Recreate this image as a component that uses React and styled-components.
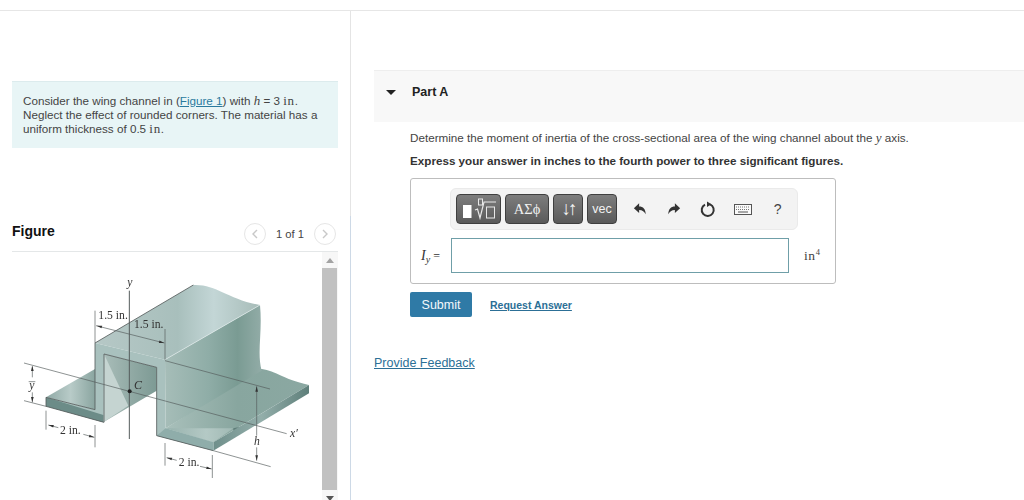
import React from "react";
import styled, { createGlobalStyle } from "styled-components";

const Global = createGlobalStyle`
  html, body { margin: 0; padding: 0; background: #fff; overflow: hidden; }
  body { font-family: "Liberation Sans", Arial, sans-serif; color: #333; }
`;
const Page = styled.div`width: 1024px; height: 500px; overflow: hidden; display: flex; flex-direction: column;`;
const TopBar = styled.div`height: 10px; border-bottom: 1px solid #e6e6e6; flex: none;`;
const Columns = styled.div`display: flex; flex: 1; min-height: 0;`;
const LeftCol = styled.div`
  width: 350px; flex: none; border-right: 1px solid #e2e2e2;
  border-image: linear-gradient(#e4e4e4 205px, #cdd9e6 205px) 1;
  padding: 70px 0 0 0; display: flex; flex-direction: column; min-height: 0;
`;
const InfoBox = styled.div`
  margin: 0 12px; width: 326px; height: 67px; box-sizing: border-box; background: #e8f5f6;
  border-top: 1px solid #dcebed; padding: 12px 11px 0; font-size: 11.66px; line-height: 14px; color: #444;
`;
const Serif = styled.span`
  font-family: "Liberation Serif", "DejaVu Serif", serif; font-size: 13px;
  font-style: ${p => p.$i ? "italic" : "normal"};
  letter-spacing: ${p => p.$i ? "0" : "0.7px"};
`;
const InlineLink = styled.a`color: #2a7a9e; text-decoration: underline;`;
const FigureHead = styled.div`
  margin: 72px 12px 0; width: 326px; height: 32px; box-sizing: border-box; border-bottom: 1px solid #e4e7e8;
  display: flex; align-items: flex-start; justify-content: space-between; padding-top: 3px;
`;
const FigureTitle = styled.div`font-size: 14px; font-weight: 700; color: #111; line-height: 16px;`;
const Pager = styled.div`display: flex; align-items: center; gap: 10px; font-size: 11.2px; color: #444; margin-right: 2px;`;
const PageBtn = styled.div`
  width: 22px; height: 22px; border-radius: 50%; border: 1px solid #e6e6e6; box-sizing: border-box;
  display: flex; align-items: center; justify-content: center; background: #fff;
`;
const FigureBody = styled.div`margin: 0 12px; width: 326px; flex: 1; display: flex; min-height: 0; overflow: hidden;`;
const FigureSvg = styled.svg`width: 310px; height: 230px; margin-top: 17px; flex: none; display: block; filter: blur(0.3px);`;
const Scrollbar = styled.div`width: 16px; flex: none; display: flex; flex-direction: column; align-items: flex-start; background: #f7f7f7;`;
const ScrollArrow = styled.div`
  height: 16px; width: 15px; flex: none; display: flex; align-items: center; justify-content: center;
`;
const ScrollThumb = styled.div`width: 15px; height: 222px; background: #c1c1c1; flex: none;`;

const RightCol = styled.div`flex: 1; min-width: 0; padding: 59px 0 0 23px; display: flex; flex-direction: column;`;
const PartBar = styled.div`
  height: 52px; box-sizing: border-box; background: #f8f8f8; border-top: 1px solid #eeeeee;
  display: flex; align-items: flex-start; padding: 14px 0 0 12px;
`;
const Caret = styled.div`
  width: 0; height: 0; border-left: 5px solid transparent; border-right: 5px solid transparent;
  border-top: 5px solid #222; margin: 5px 16px 0 0;
`;
const PartTitle = styled.div`font-size: 12.5px; font-weight: 700; color: #222; line-height: 15px;`;
const Body = styled.div`padding: 8px 0 0 36px; display: flex; flex-direction: column; align-items: flex-start;`;
const Prompt = styled.div`font-size: 11.68px; color: #444; line-height: 16px;`;
const Instruct = styled.div`font-size: 11.66px; font-weight: 700; color: #333; line-height: 16px; margin-top: 7px;`;
const AnswerBox = styled.div`
  margin-top: 9px; width: 426px; height: 106px; box-sizing: border-box; border: 1px solid #bdbdbd; border-radius: 3px;
  display: flex; flex-direction: column; padding: 9px 0 0 39px;
`;
const Toolbar = styled.div`
  width: 348px; height: 42px; box-sizing: border-box; background: #f3f3f3; border: 1px solid #eaeaea; border-radius: 6px;
  display: flex; align-items: center; padding: 0 0 0 5px;
`;
const ToolBtn = styled.div`
  width: ${p => p.$w}px; height: 30px; box-sizing: border-box; margin-right: 4px; border-radius: 4px; border: 1px solid #3f3f3f;
  background: linear-gradient(#7d7d7d, #5a5a5a); color: #f2f2f2; display: flex; align-items: center; justify-content: center;
  font-size: ${p => p.$fs || 13}px; letter-spacing: ${p => p.$ls || 0}px;
  font-family: ${p => p.$serif ? '"Liberation Serif", serif' : '"Liberation Sans", sans-serif'};
`;
const PlainTools = styled.div`display: flex; align-items: center; margin-left: 1.5px;`;
const PlainTool = styled.div`width: 34.5px; display: flex; justify-content: center; align-items: center; color: #444; font-size: 14px;`;
const AnswerRow = styled.div`display: flex; align-items: center; margin: 8px 0 0 -29px;`;
const VarLabel = styled.div`
  width: 30px; flex: none; font-family: "Liberation Serif", serif; font-size: 12px; color: #333;
  i { font-size: 14px; } sub { font-size: 10px; font-style: italic; line-height: 0; }
`;
const AnswerInput = styled.div`width: 338px; height: 35px; box-sizing: border-box; border: 1px solid #6f9fa8; background: #fff; flex: none;`;
const Unit = styled.div`
  margin-left: 15px; font-family: "Liberation Serif", serif; font-size: 13.5px; color: #444; letter-spacing: 0.6px;
  sup { font-size: 8.5px; line-height: 0; }
`;
const Actions = styled.div`display: flex; align-items: center; margin-top: 8px;`;
const Submit = styled.div`
  width: 62px; height: 25px; border-radius: 2px; background: #2f7aa6; color: #f4f8fb; font-size: 12.5px;
  display: flex; align-items: center; justify-content: center;
`;
const RequestLink = styled.a`margin-left: 18px; font-size: 10.5px; font-weight: 700; color: #2c6f96; text-decoration: underline;`;
const Feedback = styled.a`margin: 38px 0 0 -36px; font-size: 12.5px; color: #2c6f96; text-decoration: underline; line-height: 16px;`;

const Chevron = ({ left }) => (
  <svg width="8" height="10" viewBox="0 0 8 10" fill="none" stroke="#c8c8c8" strokeWidth="1.4">
    <path d={left ? "M6 1 L2 5 L6 9" : "M2 1 L6 5 L2 9"} />
  </svg>
);

const Dim = ({ d, w = 2 }) => <path d={d} fill="none" stroke="#555c5c" strokeWidth={w} />;
const Arrow = ({ x, y, a }) => <path d="M0 0 L-16 -4 L-16 4 Z" fill="#333" transform={`translate(${x} ${y}) rotate(${a})`} />;
const Label = styled.text`font-family: "Liberation Serif", serif; font-size: ${p => p.$s || 35}px; fill: #333; font-style: ${p => p.$i ? "italic" : "normal"};`;

const Figure = () => (
  <FigureSvg viewBox="36 0 930 690">
    <defs>
      <linearGradient id="top" x1="0" x2="1" y1="0" y2="0">
        <stop offset="0" stopColor="#b6c8c6" /><stop offset=".5" stopColor="#a8bfbc" /><stop offset=".72" stopColor="#c3d6d6" /><stop offset="1" stopColor="#a7bcb8" />
      </linearGradient>
      <linearGradient id="side" x1="0" x2="1" y1="0" y2="0">
        <stop offset="0" stopColor="#a6bdb8" /><stop offset=".45" stopColor="#8fada7" /><stop offset=".75" stopColor="#7a9b93" /><stop offset="1" stopColor="#92aca7" />
      </linearGradient>
      <linearGradient id="flange" x1="0" x2="1" y1="0" y2="0">
        <stop offset="0" stopColor="#a9c0bb" /><stop offset=".5" stopColor="#88a69f" /><stop offset="1" stopColor="#8ba8a2" />
      </linearGradient>
      <linearGradient id="lf" x1="0" x2="1" y1="0" y2="0">
        <stop offset="0" stopColor="#8fa9a5" /><stop offset=".5" stopColor="#b8cbc8" /><stop offset="1" stopColor="#8aa5a0" />
      </linearGradient>
      <linearGradient id="cav" x1="0" x2="1" y1="0" y2="0">
        <stop offset="0" stopColor="#a9bdb9" /><stop offset=".45" stopColor="#94aca7" /><stop offset="1" stopColor="#7d9a94" />
      </linearGradient>
      <linearGradient id="edge" x1="0" x2="1" y1="0" y2="0">
        <stop offset="0" stopColor="#6f8f8b" /><stop offset=".5" stopColor="#93aeaa" /><stop offset="1" stopColor="#5e7f7a" />
      </linearGradient>
      <linearGradient id="pale" x1="0" x2="1" y1="0" y2="0">
        <stop offset="0" stopColor="#97b2ad" /><stop offset=".6" stopColor="#b4c9c5" /><stop offset="1" stopColor="#a0b9b4" />
      </linearGradient>
    </defs>
    <path d="M497 478 L778 300 C820 300 845 330 927 348 L640 520 Z" fill="url(#flange)" />
    <path d="M497 478 L700 478 L640 520 Z" fill="url(#pale)" />
    <path d="M700 478 L760 465 L700 498 Z" fill="#5f7d78" />
    <path d="M640 520 L927 348 V373 L640 545 Z" fill="url(#edge)" />
    <path d="M495 272 L780 108 C788 190 770 250 785 305 L497 478 Z" fill="url(#side)" />
    <path d="M285 222 L580 48 C650 45 680 90 780 108 L495 272 Z" fill="url(#top)" />
    <path d="M138 385 L285 300 V422 Z" fill="url(#lf)" />
    <path d="M312 255 L470 295 V365 L310 460 Z" fill="url(#cav)" />
    <path d="M312 255 L385 410 L310 460 Z" fill="#c5d4d1" />
    <path d="M285 222 L495 272 L497 478 L640 520 V545 L470 500 V295 L312 255 L310 460 L138 412 V385 L285 422 Z" fill="#a9c1be" />
    <path d="M138 385 L138 412 L310 460 L310 438 Z" fill="#6c8c88" />
    <path d="M470 500 L640 545 V520 L497 478 Z" fill="#8fadaa" />
    <Dim d="M285 222 L580 48" w={2.5} />
    <Dim d="M138 385 L285 422 V222 M312 255 L470 295 M312 255 V460 L138 412 V385 M470 295 V500 L640 545" w={2.5} />
    <path d="M495 272 L780 108" fill="none" stroke="#dfeaea" strokeWidth="2" />
    <Dim d="M388 65 V510" w={3} />
    <Dim d="M72 282 L860 494" />
    <Dim d="M495 275 L810 360" />
    <Dim d="M72 395 L138 412" />
    <Dim d="M640 545 L812 593" />
    <Dim d="M285 125 V222 M495 180 V272 M288 170 L493 222" />
    <Arrow x={493} y={222} a={14} />
    <Arrow x={290} y={170} a={194} />
    <Dim d="M97 292 V325 M97 370 V400" />
    <Arrow x={97} y={290} a={-90} />
    <Arrow x={97} y={400} a={90} />
    <Dim d="M138 425 V482 M285 468 V535 M495 522 V590 M637 558 V627" />
    <Dim d="M145 468 L175 476 M250 496 L283 505 M500 566 L530 574 M600 592 L635 600" />
    <Arrow x={145} y={468} a={194} />
    <Arrow x={283} y={505} a={14} />
    <Arrow x={500} y={566} a={194} />
    <Arrow x={635} y={600} a={14} />
    <Dim d="M770 352 V500 M770 535 V575" />
    <Arrow x={770} y={352} a={-90} />
    <Arrow x={770} y={575} a={90} />
    <circle cx="389" cy="367" r="6" fill="#222" />
    <Label x="382" y="50" $i>y</Label>
    <Label x="295" y="150">1.5 in.</Label>
    <Label x="402" y="176">1.5 in.</Label>
    <Label x="402" y="360" $i $s={36}>C</Label>
    <Label x="180" y="494">2 in.</Label>
    <Label x="536" y="590">2 in.</Label>
    <Label x="762" y="528" $i>h</Label>
    <Label x="870" y="503" $i>x′</Label>
    <Label x="88" y="360" $i>y</Label>
    <Dim d="M86 338 H106" />
  </FigureSvg>
);

const Template = () => (
  <svg width="36" height="22" viewBox="0 0 36 22" fill="none" stroke="#e8e8e8" strokeWidth="1">
    <rect x="2" y="7" width="8.5" height="13" fill="#fff" stroke="none" />
    <rect x="17.5" y="1" width="4" height="6" />
    <path d="M14 12 L16.5 11 L19 20 L23 4 H35" strokeWidth="1.2" />
    <rect x="25.5" y="9" width="8" height="11" />
  </svg>
);
const Undo = ({ flip }) => (
  <svg width="14" height="14" viewBox="0 0 16 16" style={flip ? { transform: "scaleX(-1)" } : undefined}>
    <path d="M1 7 L7 1.5 V5 C11.5 5 14.5 8 14.5 14 C13 10.8 10.8 9 7 9 V12.5 Z" fill="#333" />
  </svg>
);
const Reset = () => (
  <svg width="17" height="17" viewBox="0 0 17 17" fill="none" stroke="#333" strokeWidth="2">
    <path d="M10 3.4 A6 6 0 1 1 5 3.6" />
    <path d="M7 0.5 L11.5 3.3 L7 6 Z" fill="#333" stroke="none" />
  </svg>
);
const Keyboard = () => (
  <svg width="18" height="11" viewBox="0 0 18 11" fill="none">
    <rect x=".5" y=".5" width="17" height="10" fill="#fafafa" stroke="#555" />
    <path d="M2 3 H16 M2 5.5 H16" stroke="#777" strokeWidth="1.2" strokeDasharray="1 1" />
    <path d="M4 8 H14" stroke="#555" />
  </svg>
);

export default function App() {
  return (
    <Page>
      <Global />
      <TopBar />
      <Columns>
        <LeftCol>
          <InfoBox>
            Consider the wing channel in (<InlineLink>Figure 1</InlineLink>) with <Serif $i>h</Serif> = 3 <Serif>in</Serif>.<br />
            Neglect the effect of rounded corners. The material has a<br />
            uniform thickness of 0.5 <Serif>in</Serif>.
          </InfoBox>
          <FigureHead>
            <FigureTitle>Figure</FigureTitle>
            <Pager>
              <PageBtn><Chevron left /></PageBtn>
              1 of 1
              <PageBtn><Chevron /></PageBtn>
            </Pager>
          </FigureHead>
          <FigureBody>
            <Figure />
            <Scrollbar>
              <ScrollArrow>
                <svg width="8" height="5" viewBox="0 0 8 5"><path d="M0 5 L4 0 L8 5 Z" fill="#a3a3a3" /></svg>
              </ScrollArrow>
              <ScrollThumb />
              <ScrollArrow>
                <svg width="8" height="5" viewBox="0 0 8 5"><path d="M0 0 L4 5 L8 0 Z" fill="#555" /></svg>
              </ScrollArrow>
            </Scrollbar>
          </FigureBody>
        </LeftCol>
        <RightCol>
          <PartBar>
            <Caret />
            <PartTitle>Part A</PartTitle>
          </PartBar>
          <Body>
            <Prompt>Determine the moment of inertia of the cross-sectional area of the wing channel about the <Serif $i>y</Serif> axis.</Prompt>
            <Instruct>Express your answer in inches to the fourth power to three significant figures.</Instruct>
            <AnswerBox>
              <Toolbar>
                <ToolBtn $w={45}><Template /></ToolBtn>
                <ToolBtn $w={44} $serif $fs={14.5}>ΑΣϕ</ToolBtn>
                <ToolBtn $w={30} $fs={19} $ls={-3}>↓↑</ToolBtn>
                <ToolBtn $w={30} $fs={12.5}>vec</ToolBtn>
                <PlainTools>
                  <PlainTool><Undo /></PlainTool>
                  <PlainTool><Undo flip /></PlainTool>
                  <PlainTool><Reset /></PlainTool>
                  <PlainTool><Keyboard /></PlainTool>
                  <PlainTool>?</PlainTool>
                </PlainTools>
              </Toolbar>
              <AnswerRow>
                <VarLabel><i>I</i><sub>y</sub> =</VarLabel>
                <AnswerInput />
                <Unit>in<sup>4</sup></Unit>
              </AnswerRow>
            </AnswerBox>
            <Actions>
              <Submit>Submit</Submit>
              <RequestLink>Request Answer</RequestLink>
            </Actions>
            <Feedback>Provide Feedback</Feedback>
          </Body>
        </RightCol>
      </Columns>
    </Page>
  );
}
